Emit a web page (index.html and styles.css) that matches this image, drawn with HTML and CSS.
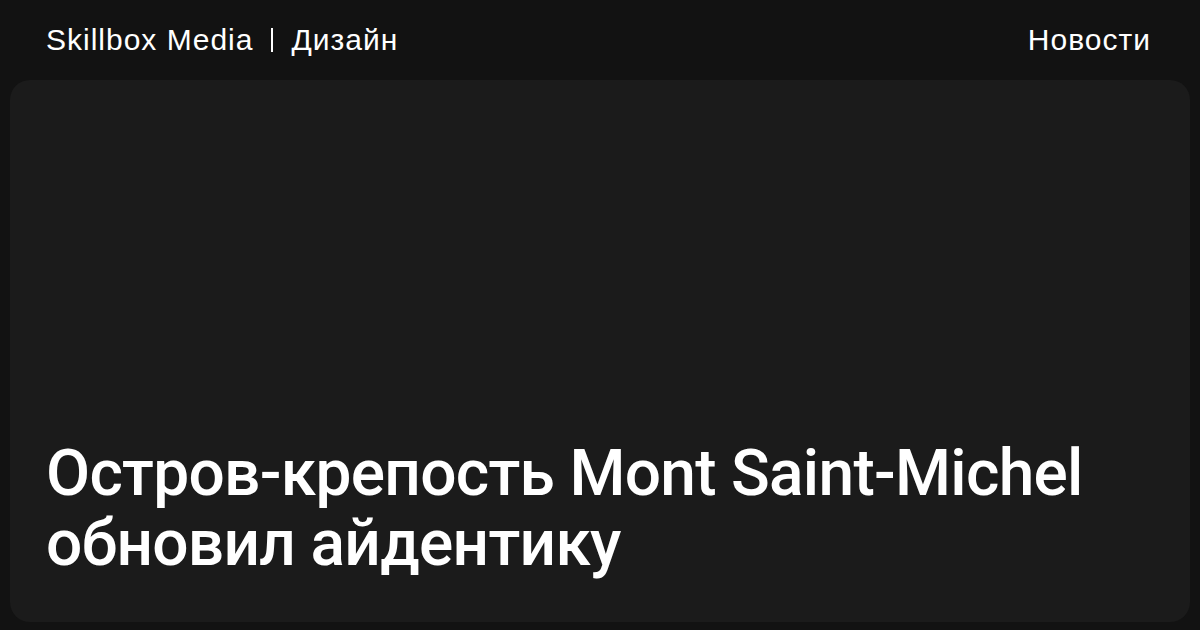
FILE: index.html
```html
<!DOCTYPE html>
<html lang="ru">
<head>
<meta charset="UTF-8" />
<title>Skillbox Media — Остров-крепость Mont Saint-Michel обновил айдентику</title>
<link rel="stylesheet" href="styles.css">
</head>
<body>
  <div class="page">
    <header class="top-bar">
      <div class="brand">
        <span class="brand-name">Skillbox Media</span>
        <span class="brand-sep"></span>
        <span class="brand-section">Дизайн</span>
      </div>
      <div class="rubric">Новости</div>
    </header>

    <main class="card">
      <h1 class="card-title">Остров-крепость Mont Saint-Michel обновил айдентику</h1>
    </main>
  </div>
</body>
</html>
```

FILE: styles.css
```css
/* Reset & base */
*, *::before, *::after {
  box-sizing: border-box;
}
html, body {
  margin: 0;
  width: 100%;
  height: 100%;
  background: #121212;
  color: #fff;
  font-family: 'Liberation Sans', Arial, sans-serif;
  overflow: hidden;
}

.page {
  width: 1200px;
  height: 630px;
  display: flex;
  flex-direction: column;
  padding: 0 10px 8px;
}

.top-bar {
  height: 80px;
  display: flex;
  align-items: center;
  justify-content: space-between;
  padding: 0 39px 0 36px;
  font-size: 30px;
  letter-spacing: 1px;
}
.brand {
  display: flex;
  align-items: center;
  gap: 18px;
}
.brand-sep {
  width: 2px;
  height: 24px;
  background: #fff;
}

.card {
  flex-grow: 1;
  background: #1b1b1b;
  border-radius: 20px;
  display: flex;
  align-items: flex-end;
  padding: 0 36px 43px;
}
.card-title {
  margin: 0;
  max-width: 1100px;
  font-family: Roboto, 'Liberation Sans', sans-serif;
  font-size: 64px;
  line-height: 70px;
  font-weight: 500;
  letter-spacing: -0.7px;
}
```
